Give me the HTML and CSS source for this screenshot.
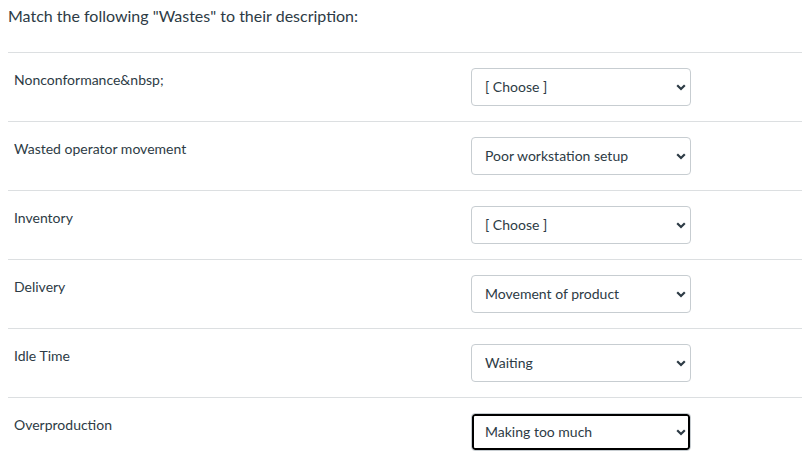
FILE: index.html
```html
<!DOCTYPE html>
<html>
<head>
<meta charset="utf-8">
<link rel="stylesheet" href="styles.css">
</head>
<body>
<div class="quiz">
  <div class="question">Match the following "Wastes" to their description:</div>
  <div class="rows">
    <div class="row">
      <div class="label">Nonconformance&amp;nbsp;</div>
      <div class="pick"><select class="sel"><option>[ Choose ]</option></select><svg class="chev" width="10" height="7" viewBox="0 0 10 7"><path d="M1.2 1.2 L5 5 L8.8 1.2" fill="none" stroke="#2d3b45" stroke-width="2.2"/></svg></div>
    </div>
    <div class="row">
      <div class="label">Wasted operator movement</div>
      <div class="pick"><select class="sel"><option>Poor workstation setup</option></select><svg class="chev" width="10" height="7" viewBox="0 0 10 7"><path d="M1.2 1.2 L5 5 L8.8 1.2" fill="none" stroke="#2d3b45" stroke-width="2.2"/></svg></div>
    </div>
    <div class="row">
      <div class="label">Inventory</div>
      <div class="pick"><select class="sel"><option>[ Choose ]</option></select><svg class="chev" width="10" height="7" viewBox="0 0 10 7"><path d="M1.2 1.2 L5 5 L8.8 1.2" fill="none" stroke="#2d3b45" stroke-width="2.2"/></svg></div>
    </div>
    <div class="row">
      <div class="label">Delivery</div>
      <div class="pick"><select class="sel"><option>Movement of product</option></select><svg class="chev" width="10" height="7" viewBox="0 0 10 7"><path d="M1.2 1.2 L5 5 L8.8 1.2" fill="none" stroke="#2d3b45" stroke-width="2.2"/></svg></div>
    </div>
    <div class="row">
      <div class="label">Idle Time</div>
      <div class="pick"><select class="sel"><option>Waiting</option></select><svg class="chev" width="10" height="7" viewBox="0 0 10 7"><path d="M1.2 1.2 L5 5 L8.8 1.2" fill="none" stroke="#2d3b45" stroke-width="2.2"/></svg></div>
    </div>
    <div class="row">
      <div class="label">Overproduction</div>
      <div class="pick"><select class="sel focused"><option>Making too much</option></select><svg class="chev" width="10" height="7" viewBox="0 0 10 7"><path d="M1.2 1.2 L5 5 L8.8 1.2" fill="none" stroke="#2d3b45" stroke-width="2.2"/></svg></div>
    </div>
  </div>
</div>
</body>
</html>
```
FILE: styles.css
```css
html, body {
  margin: 0;
  padding: 0;
  background: #fff;
}
body {
  font-family: Lato, "Liberation Sans", sans-serif;
  color: #2d3b45;
  width: 802px;
  height: 475px;
  overflow: hidden;
}
.quiz {
  padding-left: 8px;
}
.question {
  font-size: 16px;
  line-height: 22px;
  padding-top: 5px;
  height: 52px;
  box-sizing: border-box;
}
.row {
  display: grid;
  grid-template-columns: 463px 220px;
  align-items: start;
  border-top: 1px solid #dcdfe1;
  height: 69px;
  padding-top: 15px;
  box-sizing: border-box;
}
.rows .row:last-child {
  height: 78px;
}
.label {
  font-size: 14px;
  line-height: 20px;
  padding-left: 6px;
  padding-top: 2px;
}
.pick {
  position: relative;
  width: 220px;
  height: 38px;
}
.sel {
  -webkit-appearance: none;
  appearance: none;
  display: block;
  width: 220px;
  height: 38px;
  box-sizing: border-box;
  margin: 0;
  border: 1px solid #c7cdd1;
  border-radius: 4px;
  background: #fff;
  padding: 0 28px 2px 13px;
  font-family: Lato, "Liberation Sans", sans-serif;
  font-size: 14px;
  color: #2d3b45;
  outline: none;
}
.sel.focused {
  box-shadow: inset 0 0 0 2px #000;
  border-radius: 4px;
}
.chev {
  position: absolute;
  right: 5px;
  top: 16px;
  pointer-events: none;
}
```
